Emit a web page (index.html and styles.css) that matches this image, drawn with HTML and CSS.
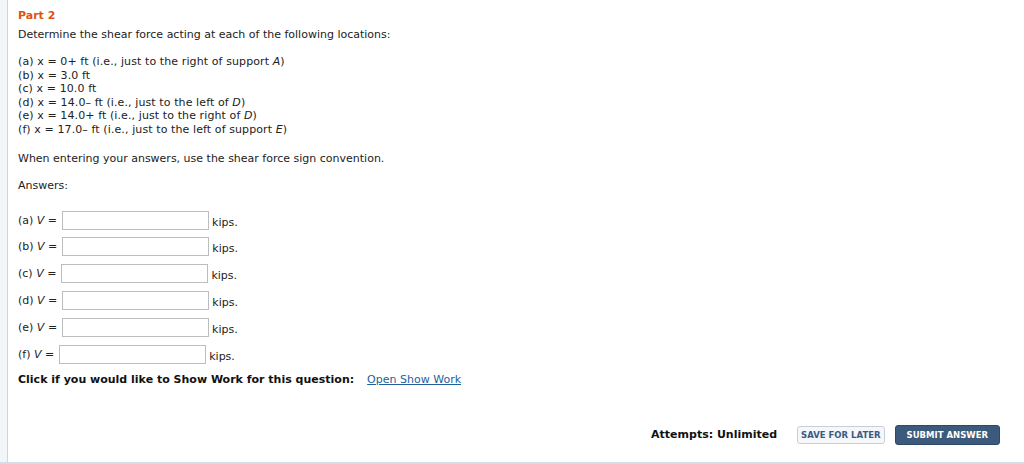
FILE: index.html
```html
<!DOCTYPE html>
<html lang="en">
<head>
    <meta charset="UTF-8">
    <title>Part 2</title>
    <link rel="stylesheet" href="styles.css">
</head>
<body>
    <div class="page">
        <div class="side-strip"></div>

        <div class="question">
            <h2 class="part-title">Part 2</h2>
            <p class="prompt">Determine the shear force acting at each of the following locations:</p>

            <div class="locations">
                <div>(a) x = 0+ ft (i.e., just to the right of support <i>A</i>)</div>
                <div>(b) x = 3.0 ft</div>
                <div>(c) x = 10.0 ft</div>
                <div>(d) x = 14.0&ndash; ft (i.e., just to the left of <i>D</i>)</div>
                <div>(e) x = 14.0+ ft (i.e., just to the right of <i>D</i>)</div>
                <div>(f) x = 17.0&ndash; ft (i.e., just to the left of support <i>E</i>)</div>
            </div>

            <p class="prompt">When entering your answers, use the shear force sign convention.</p>
            <p class="answers-label">Answers:</p>

            <div class="answer-list">
                <div class="answer-row">
                    <label>(a) <i>V</i> =</label>
                    <input type="text" class="answer-input">
                    <span class="unit">kips.</span>
                </div>
                <div class="answer-row">
                    <label>(b) <i>V</i> =</label>
                    <input type="text" class="answer-input">
                    <span class="unit">kips.</span>
                </div>
                <div class="answer-row">
                    <label>(c) <i>V</i> =</label>
                    <input type="text" class="answer-input">
                    <span class="unit">kips.</span>
                </div>
                <div class="answer-row">
                    <label>(d) <i>V</i> =</label>
                    <input type="text" class="answer-input">
                    <span class="unit">kips.</span>
                </div>
                <div class="answer-row">
                    <label>(e) <i>V</i> =</label>
                    <input type="text" class="answer-input">
                    <span class="unit">kips.</span>
                </div>
                <div class="answer-row">
                    <label>(f) <i>V</i> =</label>
                    <input type="text" class="answer-input">
                    <span class="unit">kips.</span>
                </div>
            </div>

            <div class="show-work">
                <strong>Click if you would like to Show Work for this question:</strong>
                <a href="#" class="show-work-link">Open Show Work</a>
            </div>

            <div class="footer-bar">
                <span class="attempts">Attempts: Unlimited</span>
                <button class="btn btn-light">SAVE FOR LATER</button>
                <button class="btn btn-dark">SUBMIT ANSWER</button>
            </div>
        </div>
    </div>
</body>
</html>
```

FILE: styles.css
```css
* {
    margin: 0;
    padding: 0;
    box-sizing: border-box;
}

body {
    font-family: "DejaVu Sans", Verdana, sans-serif;
    font-size: 11px;
    color: #222;
    background: white;
}

.page {
    display: flex;
    height: 464px;
    border-bottom: 2px solid #d6dce6;
}

.side-strip {
    width: 8px;
    background: #f3f6f9;
    border-right: 1px solid #cfd5de;
}

.question {
    flex: 1;
    padding: 9px 24px 0 10px;
    display: flex;
    flex-direction: column;
}

.part-title {
    font-size: 11px;
    font-weight: bold;
    color: #df5116;
    line-height: 14px;
}

.prompt {
    margin-top: 5px;
    line-height: 14px;
}

.locations {
    margin-top: 13px;
    margin-bottom: 10px;
    line-height: 13.6px;
    letter-spacing: 0.1px;
}

.answers-label {
    margin-top: 13px;
    line-height: 14px;
}

.answer-list {
    margin-top: 18px;
    display: flex;
    flex-direction: column;
    gap: 7.8px;
}

.answer-row {
    display: flex;
    align-items: center;
    height: 19px;
}

.answer-row label {
    margin-right: 5px;
}

.answer-input {
    width: 147px;
    height: 19px;
    border: 1px solid #bdbdbd;
    background: white;
    margin-right: 3px;
}

.unit {
    padding-top: 4px;
}

.show-work {
    margin-top: 9px;
    display: flex;
    gap: 13px;
    line-height: 14px;
}

.show-work strong {
    color: #111;
}

.show-work-link {
    color: #1f5f9a;
    text-decoration: underline;
}

.footer-bar {
    margin-top: 38px;
    display: flex;
    justify-content: flex-end;
    align-items: center;
    gap: 10px;
}

.attempts {
    font-weight: bold;
    font-size: 11px;
    color: #111;
    margin-right: 10px;
}

.btn {
    font-family: "DejaVu Sans", Verdana, sans-serif;
    font-size: 8.5px;
    font-weight: bold;
    border-radius: 3px;
    height: 18px;
    padding: 0 3px;
    cursor: pointer;
}

.btn-light {
    background: #f5f7fa;
    color: #3a5a80;
    border: 1px solid #c6d0dc;
}

.btn-dark {
    background: #3c5a7c;
    color: white;
    border: 1px solid #2f4a68;
    height: 20px;
    padding: 0 11px;
}
```
